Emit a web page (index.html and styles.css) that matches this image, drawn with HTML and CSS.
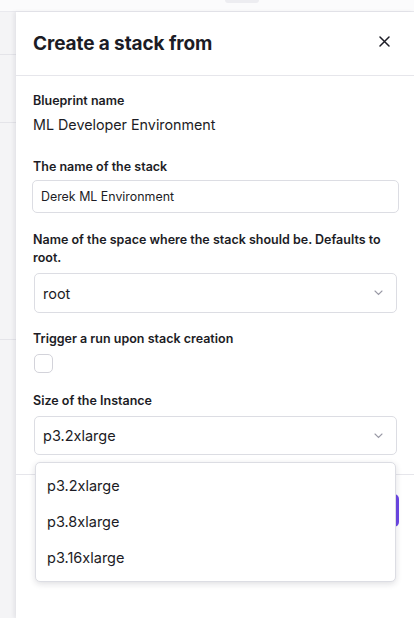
FILE: index.html
```html
<!DOCTYPE html>
<html lang="en">
<head>
<meta charset="utf-8">
<title>Create a stack from</title>
<link rel="stylesheet" href="styles.css">
</head>
<body>
<div class="top-backdrop"><span class="top-pill"></span></div>
<div class="layout">
  <div class="left-backdrop">
    <div class="bd-row r1"></div>
    <div class="bd-row r2"></div>
    <div class="bd-row r3"></div>
  </div>
  <aside class="drawer">
    <header class="drawer-header">
      <h1 class="drawer-title">Create a stack from</h1>
      <button class="close-btn" aria-label="Close">
        <svg width="11" height="11" viewBox="0 0 11 11"><path d="M1 1 L10 10 M10 1 L1 10" stroke="#1d1d26" stroke-width="1.5" stroke-linecap="round" fill="none"/></svg>
      </button>
    </header>
    <div class="drawer-body">
      <div class="field f-blueprint">
        <div class="label">Blueprint name</div>
        <div class="value">ML Developer Environment</div>
      </div>
      <div class="field f-name">
        <div class="label">The name of the stack</div>
        <div class="input">Derek ML Environment</div>
      </div>
      <div class="field f-space">
        <div class="label wrap">Name of the space where the stack should be. Defaults to root.</div>
        <div class="select"><span>root</span>
          <svg class="chev" width="9" height="6" viewBox="0 0 9 6"><path d="M1 1 L4.5 4.5 L8 1" stroke="#9a9aa6" stroke-width="1.1" fill="none" stroke-linecap="round"/></svg>
        </div>
      </div>
      <div class="field f-trigger">
        <div class="label">Trigger a run upon stack creation</div>
        <div class="checkbox"></div>
      </div>
      <div class="field f-size">
        <div class="label">Size of the Instance</div>
        <div class="select size-select"><span>p3.2xlarge</span>
          <svg class="chev" width="9" height="6" viewBox="0 0 9 6"><path d="M1 1 L4.5 4.5 L8 1" stroke="#9a9aa6" stroke-width="1.1" fill="none" stroke-linecap="round"/></svg>
          <ul class="menu">
            <li>p3.2xlarge</li>
            <li>p3.8xlarge</li>
            <li>p3.16xlarge</li>
          </ul>
        </div>
      </div>
    </div>
    <footer class="drawer-footer">
      <button class="primary-btn">Create stack</button>
    </footer>
  </aside>
</div>
</body>
</html>
```
FILE: styles.css
```css
* { box-sizing: border-box; }
html, body { margin: 0; padding: 0; }
body {
  width: 414px;
  height: 618px;
  overflow: hidden;
  background: #f4f4f6;
  font-family: Inter, "Noto Sans", sans-serif;
  color: #1c1c25;
}
.top-backdrop {
  height: 12px;
  background: #fbfbfc;
  border-bottom: 1px solid #e9e9ee;
  display: flex;
  justify-content: center;
}
.top-pill {
  width: 34px;
  height: 3px;
  margin-left: 70px;
  border-radius: 0 0 8px 8px;
  background: #ededf1;
}
.layout {
  display: flex;
  height: 606px;
}
.left-backdrop {
  width: 16px;
  flex: none;
  background: #f4f4f6;
}
.bd-row { border-bottom: 1px solid #e4e4e9; }
.r1 { height: 43px; }
.r2 { height: 68px; }
.r3 { height: 217px; }
.drawer {
  flex: 1;
  background: #ffffff;
  box-shadow: -2px 0 4px rgba(30, 30, 50, 0.08);
  display: flex;
  flex-direction: column;
}
.drawer-header {
  height: 64px;
  border-bottom: 1px solid #e6e6eb;
  display: flex;
  align-items: center;
  justify-content: space-between;
  padding: 0 24px 0 17px;
}
.drawer-title {
  margin: 0;
  font-size: 19px;
  font-weight: 700;
  letter-spacing: -0.1px;
}
.close-btn {
  border: 0;
  background: none;
  padding: 0;
  width: 11px;
  height: 11px;
  display: flex;
  margin-top: -4px;
}
.drawer-body {
  padding: 17px 16px 19px 17px;
  border-bottom: 1px solid #e6e6eb;
}
.label {
  font-size: 12.5px;
  font-weight: 600;
  line-height: 16px;
}
.label.wrap { line-height: 18px; padding-right: 6px; }
.value {
  font-size: 14.3px;
  line-height: 20px;
  margin-top: 6px;
}
.f-blueprint { margin-bottom: 24px; }
.f-name { margin-bottom: 18px; }
.f-space { margin-bottom: 18px; }
.f-trigger { margin-bottom: 20px; }
.input {
  margin-top: 5px;
  height: 33px;
  border: 1px solid #dcdde3;
  border-radius: 5px;
  font-size: 12.4px;
  line-height: 31px;
  padding: 0 8px;
  margin-left: -1px;
  margin-right: -1px;
}
.select {
  position: relative;
  margin-top: 6px;
  margin-left: 1px;
  margin-right: 1px;
  height: 40px;
  border: 1px solid #dcdde3;
  border-radius: 5px;
  display: flex;
  align-items: center;
  justify-content: space-between;
  padding: 0 13px 0 8px;
  font-size: 14.5px;
}
.size-select { margin-top: 7px; height: 39px; }
.chev { display: block; }
.checkbox {
  margin-top: 7px;
  margin-left: 1px;
  width: 19px;
  height: 19px;
  border: 1px solid #d3d3da;
  border-radius: 5px;
}
.menu {
  position: absolute;
  left: 0;
  right: 0;
  top: 45px;
  margin: 0;
  list-style: none;
  padding: 5px 0;
  background: #fff;
  border: 1px solid #dcdde3;
  border-radius: 5px;
  box-shadow: 0 2px 6px rgba(30, 30, 50, 0.14);
  z-index: 5;
}
.menu li {
  height: 36px;
  line-height: 36px;
  padding-left: 11px;
  font-size: 14.5px;
}
.drawer-footer {
  display: flex;
  justify-content: flex-end;
  padding: 19px 15px 0 0;
}
.primary-btn {
  height: 33px;
  border: 0;
  border-radius: 5px;
  background: #6c47e6;
  color: #fff;
  font-family: inherit;
  font-size: 13px;
  font-weight: 700;
  padding: 0 16px;
}
```
